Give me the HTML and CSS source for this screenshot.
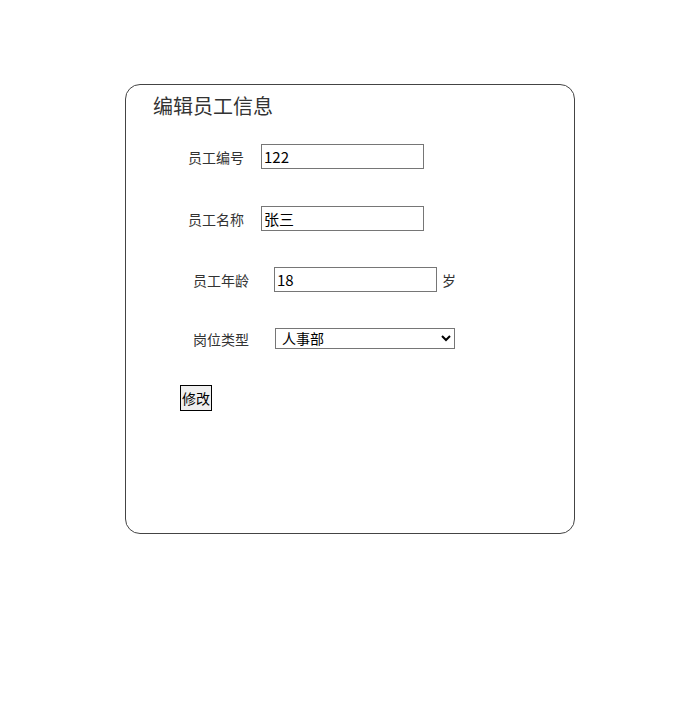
FILE: index.html
```html
<!DOCTYPE html>
<html lang="zh">
<head>
<meta charset="utf-8">
<title>编辑员工信息</title>
<link rel="stylesheet" href="styles.css">
</head>
<body>
<div class="card">
  <h2 class="title">编辑员工信息</h2>
  <form class="form">
    <div class="row row-a">
      <label class="label">员工编号</label>
      <input class="field" type="text" value="122">
    </div>
    <div class="row row-a row-2">
      <label class="label">员工名称</label>
      <input class="field" type="text" value="张三">
    </div>
    <div class="row row-b">
      <label class="label">员工年龄</label>
      <input class="field" type="text" value="18">
      <span class="unit">岁</span>
    </div>
    <div class="row row-c">
      <label class="label">岗位类型</label>
      <select class="select">
        <option>人事部</option>
      </select>
    </div>
    <div class="row row-btn">
      <button class="btn" type="button">修改</button>
    </div>
  </form>
</div>
</body>
</html>
```

FILE: styles.css
```css
html, body {
  margin: 0;
  padding: 0;
  background: #fff;
}
body {
  padding: 84px 0 0 125px;
  font-family: "Noto Sans CJK SC", "Noto Sans", sans-serif;
  color: #333;
}
.card {
  width: 450px;
  height: 450px;
  box-sizing: border-box;
  border: 1px solid #444;
  border-radius: 15px;
}
.title {
  margin: 9px 0 0 27px;
  font-size: 20px;
  line-height: 24px;
  font-weight: normal;
  color: #333;
}
.form {
  margin: 26px 0 0 0;
  display: flex;
  flex-direction: column;
}
.row {
  display: flex;
  align-items: center;
  height: 25px;
}
.label {
  font-size: 14px;
  width: 56px;
  white-space: nowrap;
  color: #333;
}
.row-a { padding-left: 62px; }
.row-a .label { margin-right: 17px; }
.row-2 { margin-top: 37px; }
.row-b { padding-left: 67px; margin-top: 36px; }
.row-b .label { margin-right: 25px; }
.row-c { padding-left: 67px; margin-top: 36px; height: 21px; }
.row-c .label { margin-right: 26px; }
.field {
  box-sizing: border-box;
  width: 163px;
  height: 25px;
  border: 1px solid #767676;
  padding: 0 2px;
  font-family: "Noto Sans CJK SC", "Noto Sans", sans-serif;
  font-size: 15px;
  color: #000;
  background: #fff;
  margin: 0;
}
.unit {
  margin-left: 5px;
  font-size: 14px;
  color: #333;
}
.select {
  box-sizing: border-box;
  width: 180px;
  height: 21px;
  border: 1px solid #767676;
  border-radius: 0;
  padding: 0 2px;
  font-family: "Liberation Sans", "Noto Sans CJK SC", sans-serif;
  font-size: 14px;
  color: #000;
  background: #fff;
  margin: 0;
}
.row-btn {
  padding-left: 54px;
  margin-top: 36px;
}
.btn {
  box-sizing: border-box;
  width: 32px;
  height: 26px;
  padding: 0;
  border: 1px solid #000;
  border-radius: 0;
  background: #efefef;
  font-family: "Noto Sans CJK SC", "Noto Sans", sans-serif;
  font-size: 14px;
  color: #000;
}
```
